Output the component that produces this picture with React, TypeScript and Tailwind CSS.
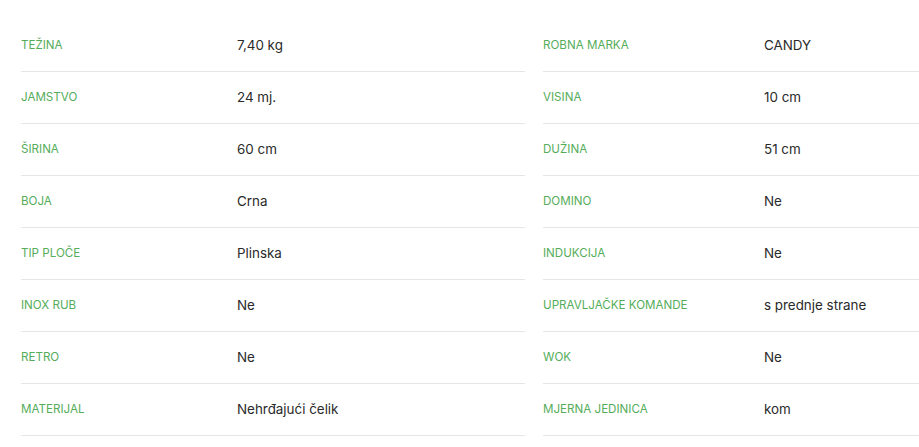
const left: [string, string][] = [
  ['TEŽINA', '7,40 kg'],
  ['JAMSTVO', '24 mj.'],
  ['ŠIRINA', '60 cm'],
  ['BOJA', 'Crna'],
  ['TIP PLOČE', 'Plinska'],
  ['INOX RUB', 'Ne'],
  ['RETRO', 'Ne'],
  ['MATERIJAL', 'Nehrđajući čelik'],
];

const right: [string, string][] = [
  ['ROBNA MARKA', 'CANDY'],
  ['VISINA', '10 cm'],
  ['DUŽINA', '51 cm'],
  ['DOMINO', 'Ne'],
  ['INDUKCIJA', 'Ne'],
  ['UPRAVLJAČKE KOMANDE', 's prednje strane'],
  ['WOK', 'Ne'],
  ['MJERNA JEDINICA', 'kom'],
];

function SpecTable({ rows, labelWidth }: { rows: [string, string][]; labelWidth: string }) {
  return (
    <div className="flex flex-col">
      {rows.map(([label, value]) => (
        <div key={label} className="flex items-center h-[52px] border-b border-[#e6e6e6]">
          <span className={`${labelWidth} shrink-0 text-[11.6px] text-[#55ad5a]`}>{label}</span>
          <span className="text-[13.4px] text-[#2a2a2a]">{value}</span>
        </div>
      ))}
    </div>
  );
}

export default function App() {
  return (
    <div className="w-[919px] h-[447px] overflow-hidden bg-white font-['Inter',sans-serif]">
      <div className="grid grid-cols-[504px_504px] gap-x-[18px] pl-[21px] pt-[20px]">
        <SpecTable rows={left} labelWidth="w-[216px]" />
        <SpecTable rows={right} labelWidth="w-[221px]" />
      </div>
    </div>
  );
}
